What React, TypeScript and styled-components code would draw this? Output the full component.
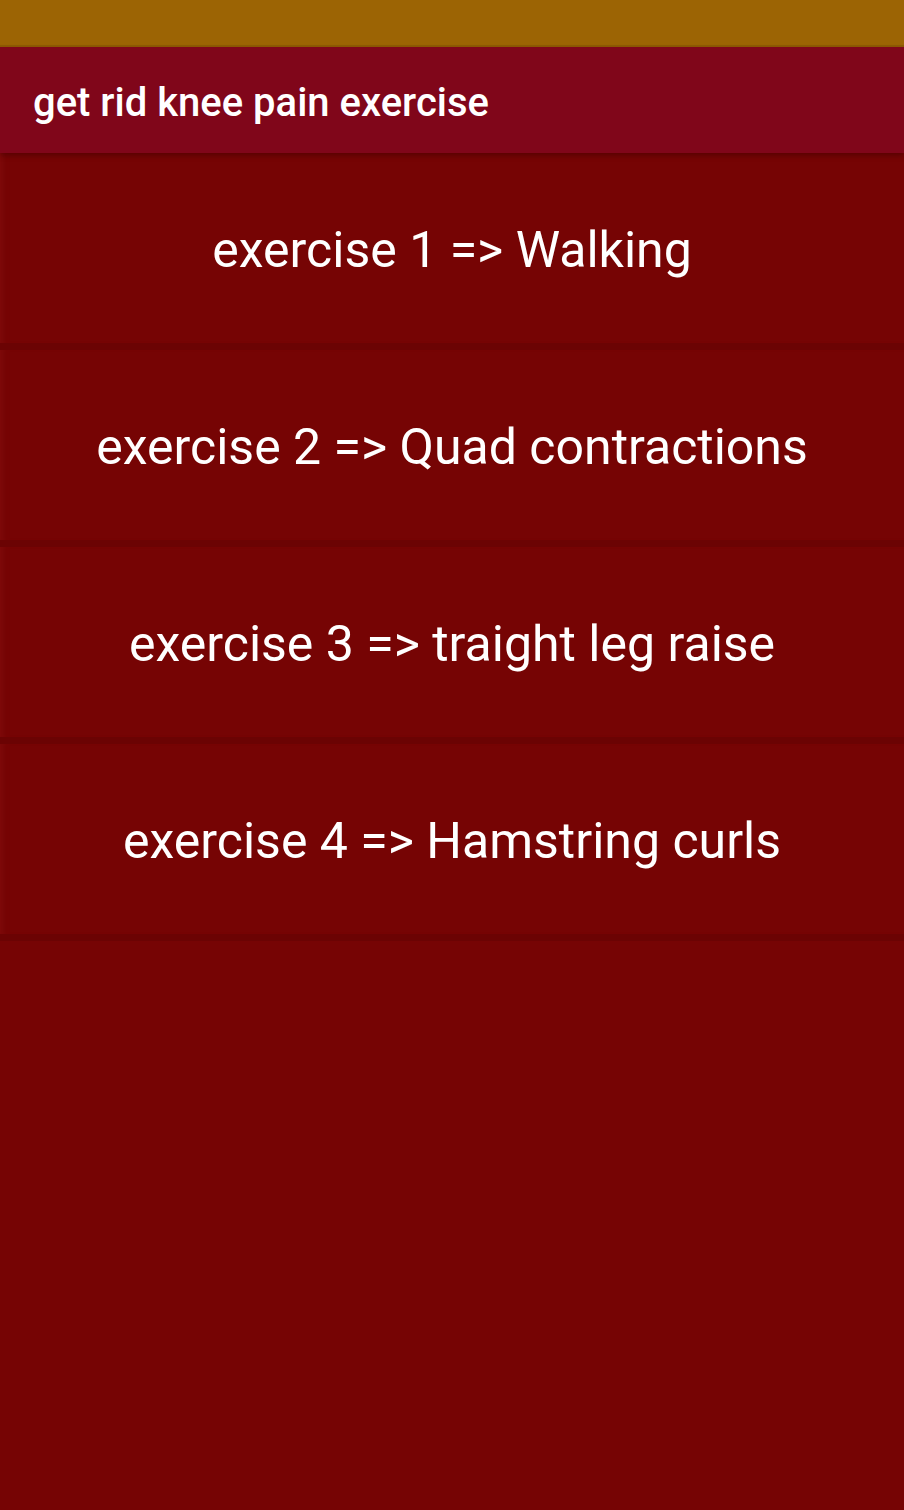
import styled, { createGlobalStyle } from "styled-components";

const GlobalStyle = createGlobalStyle`
  html, body {
    margin: 0;
    padding: 0;
    background: #760404;
  }
  body {
    font-family: Roboto, "Noto Sans", "Liberation Sans", sans-serif;
  }
`;

const exercises = [
  "exercise 1 => Walking",
  "exercise 2 => Quad contractions",
  "exercise 3 => traight leg raise",
  "exercise 4 => Hamstring curls",
];

const App = () => {
  return (
    <>
      <GlobalStyle />
      <Screen>
        <StatusBar />
        <AppBar>
          <Title>get rid knee pain exercise</Title>
        </AppBar>
        <List>
          {exercises.map((name) => (
            <Row key={name}>
              <RowText>{name}</RowText>
            </Row>
          ))}
        </List>
      </Screen>
    </>
  );
};

export default App;

const Screen = styled.div`
  width: 904px;
  height: 1510px;
  background: #760404;
  display: flex;
  flex-direction: column;
  overflow: hidden;
`;

const StatusBar = styled.div`
  height: 45px;
  background: #9c6404;
  border-bottom: 2px solid #8e5a04;
  flex-shrink: 0;
`;

const AppBar = styled.div`
  height: 106px;
  background: #80061a;
  display: flex;
  align-items: center;
  padding-left: 33px;
  padding-top: 4px;
  box-sizing: border-box;
  box-shadow: 0 3px 5px rgba(60, 0, 0, 0.45);
  position: relative;
  z-index: 1;
  flex-shrink: 0;
`;

const Title = styled.h1`
  margin: 0;
  color: #ffffff;
  font-size: 40px;
  font-weight: 500;
  letter-spacing: 0;
`;

const List = styled.div`
  display: flex;
  flex-direction: column;
`;

const Row = styled.div`
  height: 197px;
  box-sizing: border-box;
  padding-top: 4px;
  display: flex;
  align-items: center;
  justify-content: center;
  background: #760404;
  border-bottom: 7px solid #6b0303;
  box-shadow: inset 8px 0 6px -6px rgba(140, 20, 20, 0.5);
`;

const RowText = styled.span`
  color: #ffffff;
  font-size: 50px;
  font-weight: 400;
`;
